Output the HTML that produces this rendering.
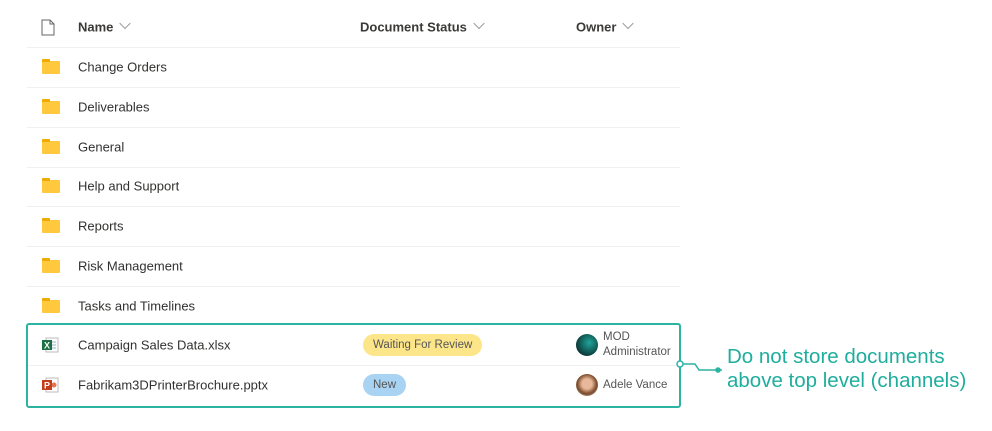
<!DOCTYPE html>
<html><head><style>
body{margin:0;width:992px;height:431px;background:#fff;font-family:"Liberation Sans",sans-serif;position:relative;overflow:hidden;color:#333}
.row{position:absolute;left:27px;width:653px;height:39.8px;border-bottom:1px solid #f0f0f0;font-size:13px;color:#323130}
.row .t{position:absolute;left:51px;top:50%;transform:translateY(-50%);white-space:nowrap}
.fold{position:absolute;left:15px;top:50%;margin-top:-6px;width:18px;height:13px;background:#ffc83d;border-radius:1px}
.fold:before{content:"";position:absolute;left:0;top:-2px;width:8px;height:3px;background:#f0ab00;border-radius:1px 1px 0 0}
.hdr{font-weight:bold;color:#3b3a39;font-size:13px}
.chev{display:inline-block;width:7px;height:7px;border-right:1px solid #999;border-bottom:1px solid #999;transform:rotate(45deg);margin-left:8px;position:relative;top:-4px}
.pill{position:absolute;top:50%;transform:translateY(-50%);height:22px;line-height:22px;border-radius:11px;font-size:11.5px;color:#555;padding:0 10px}
.av{position:absolute;left:549px;top:50%;margin-top:-11px;width:22px;height:22px;border-radius:50%}
</style></head><body>
<div class="row" style="top:7px">
 <svg style="position:absolute;left:14px;top:12px" width="14" height="17" viewBox="0 0 14 17"><path d="M1 1h8l4 4v11H1z M9 1v4h4" fill="none" stroke="#666" stroke-width="1"/></svg>
 <span class="t hdr">Name<span class="chev"></span></span>
 <span class="t hdr" style="left:333px">Document Status<span class="chev"></span></span>
 <span class="t hdr" style="left:549px">Owner<span class="chev"></span></span>
</div>
<div class="row" style="top:47px"><div class="fold"></div><span class="t">Change Orders</span></div>
<div class="row" style="top:87px"><div class="fold"></div><span class="t">Deliverables</span></div>
<div class="row" style="top:127px"><div class="fold"></div><span class="t">General</span></div>
<div class="row" style="top:166px"><div class="fold"></div><span class="t">Help and Support</span></div>
<div class="row" style="top:206px"><div class="fold"></div><span class="t">Reports</span></div>
<div class="row" style="top:246px"><div class="fold"></div><span class="t">Risk Management</span></div>
<div class="row" style="top:286px;border:none"><div class="fold"></div><span class="t">Tasks and Timelines</span></div>
<div class="row" style="top:325px">
 <svg style="position:absolute;left:14px;top:12px" width="18" height="16"><rect x="5" y="1" width="12" height="14" fill="#fff" stroke="#bbb"/><path d="M10 5h5M10 8h5M10 11h5" stroke="#8bc" stroke-width="1"/><rect x="1" y="3" width="10" height="10" fill="#1d7044"/><text x="3" y="11.5" font-size="9" fill="#fff" font-family="Liberation Sans" font-weight="bold">X</text></svg>
 <span class="t">Campaign Sales Data.xlsx</span>
 <span class="pill" style="left:336px;background:#fde68a">Waiting For Review</span>
 <div class="av" style="background:radial-gradient(circle at 60% 40%,#1fa59a,#0b3b3a 70%,#222)"></div>
 <span class="t" style="left:576px;font-size:11.5px;color:#555;line-height:15px">MOD<br>Administrator</span>
</div>
<div class="row" style="top:365px;border:none">
 <svg style="position:absolute;left:14px;top:12px" width="18" height="16"><rect x="5" y="1" width="12" height="14" fill="#fff" stroke="#bbb"/><circle cx="13" cy="8" r="2.5" fill="#e97451"/><rect x="1" y="3" width="10" height="10" fill="#c43e1c"/><text x="3" y="11.5" font-size="9" fill="#fff" font-family="Liberation Sans" font-weight="bold">P</text></svg>
 <span class="t">Fabrikam3DPrinterBrochure.pptx</span>
 <span class="pill" style="left:336px;background:#a9d3f2">New</span>
 <div class="av" style="background:radial-gradient(circle at 50% 45%,#e8b89a 30%,#7a4a2a 60%,#ddd)"></div>
 <span class="t" style="left:576px;font-size:11.5px;color:#555">Adele Vance</span>
</div>
<div style="position:absolute;left:26px;top:323px;width:651px;height:81px;border:2px solid #2bb3a3;border-radius:3px"></div>
<svg style="position:absolute;left:674px;top:356px" width="50" height="20"><path d="M6 8h15l4 6h23" fill="none" stroke="#2bb3a3" stroke-width="1.5"/><circle cx="6" cy="8" r="3" fill="#fff" stroke="#2bb3a3" stroke-width="1.5"/><circle cx="44" cy="14" r="2.8" fill="#2bb3a3"/></svg>
<div style="position:absolute;left:727px;top:345px;font-size:20.5px;line-height:24px;color:#1fae9e">Do not store documents<br>above top level (channels)</div>
</body></html>
